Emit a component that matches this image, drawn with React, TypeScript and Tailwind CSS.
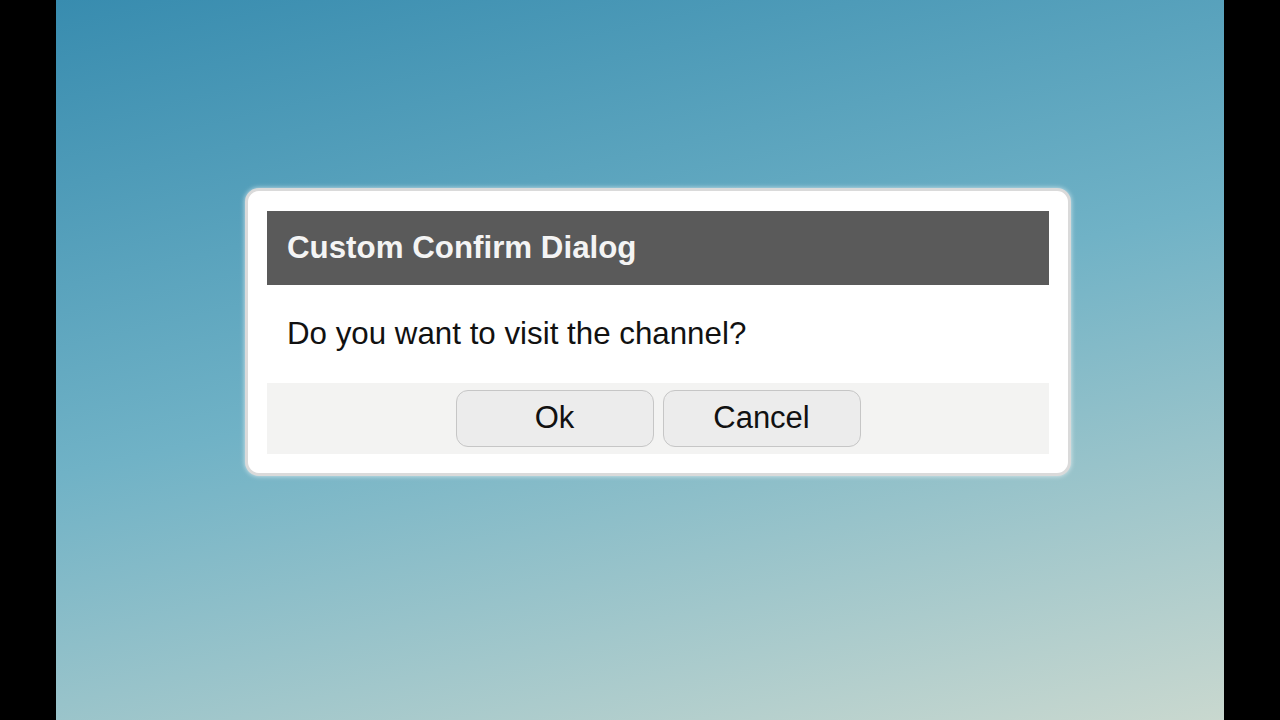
export default function App() {
  return (
    <div
      className="flex h-[720px] w-[1280px] bg-black"
      style={{ fontFamily: '"Liberation Sans", Arial, sans-serif' }}
    >
      <div className="w-[56px] shrink-0 bg-black" />
      <div className="flex-1 bg-[linear-gradient(167deg,#388caf_0%,#70b2c6_48%,#c9d8cf_100%)] pl-[189px] pt-[188px]">
        <div className="w-[826px] rounded-[14px] border-[3px] border-[#dadada] bg-white px-[19px] pb-[19px] pt-[20px] shadow-[0_0_5px_rgba(255,255,255,0.7)]">
          <div className="flex h-[74px] items-center bg-[#5a5a5a] px-[20px] text-[31.3px] font-bold text-[#f4f4f4]">
            Custom Confirm Dialog
          </div>
          <div className="flex h-[98px] items-center px-[20px] text-[31.3px] text-[#111]">
            Do you want to visit the channel?
          </div>
          <div className="flex h-[71px] items-center justify-center gap-[9px] bg-[#f3f3f2]">
            <button className="h-[57px] w-[198px] rounded-[12px] border-[1.5px] border-[#c6c6c6] bg-[#ececec] text-[31px] text-[#111]">
              Ok
            </button>
            <button className="h-[57px] w-[198px] rounded-[12px] border-[1.5px] border-[#c6c6c6] bg-[#ececec] text-[31px] text-[#111]">
              Cancel
            </button>
          </div>
        </div>
      </div>
      <div className="w-[56px] shrink-0 bg-black" />
    </div>
  );
}
